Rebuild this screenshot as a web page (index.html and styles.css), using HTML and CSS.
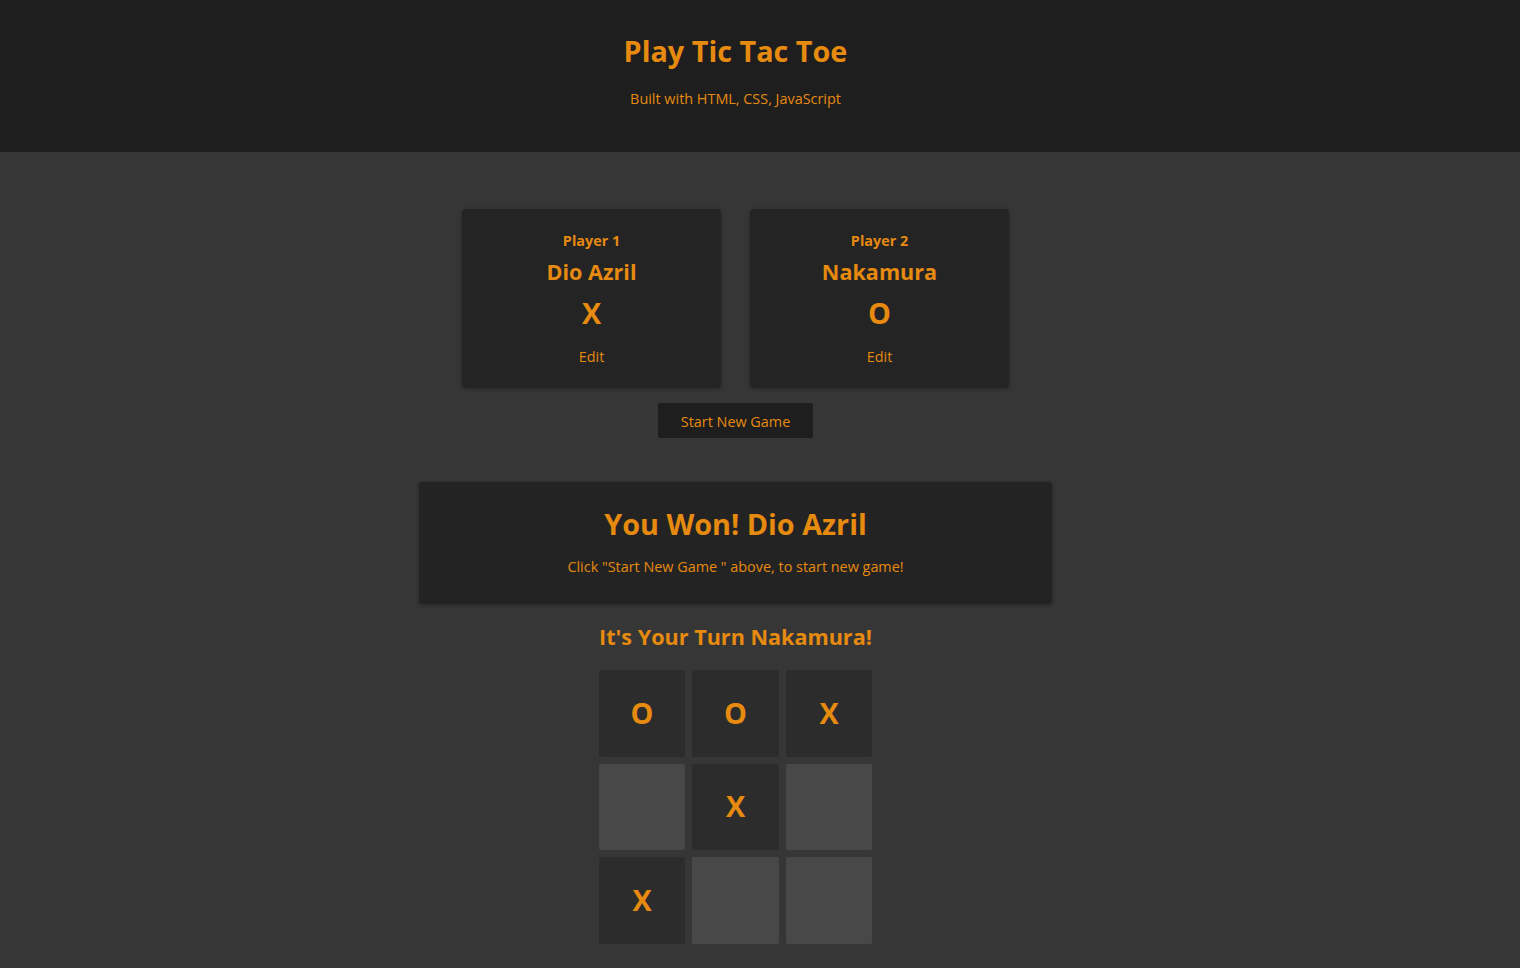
FILE: index.html
```html
<!DOCTYPE html>
<html lang="en">
<head>
  <meta charset="utf-8" />
  <meta name="viewport" content="width=device-width, initial-scale=1" />
  <title>Play Tic Tac Toe</title>
  <link rel="stylesheet" href="styles.css">
</head>
<body>
  <header class="site-header">
    <h1>Play Tic Tac Toe</h1>
    <p>Built with HTML, CSS, JavaScript</p>
  </header>

  <main class="main">
    <section class="players">
      <article class="player-card">
        <h3>Player 1</h3>
        <h2>Dio Azril</h2>
        <p class="symbol">X</p>
        <button class="link-btn">Edit</button>
      </article>
      <article class="player-card">
        <h3>Player 2</h3>
        <h2>Nakamura</h2>
        <p class="symbol">O</p>
        <button class="link-btn">Edit</button>
      </article>
    </section>

    <button class="start-btn">Start New Game</button>

    <section class="game-over">
      <h2>You Won! Dio Azril</h2>
      <p>Click "Start New Game " above, to start new game!</p>
    </section>

    <h2 class="turn">It's Your Turn Nakamura!</h2>

    <ol class="board">
      <li class="cell taken">O</li>
      <li class="cell taken">O</li>
      <li class="cell taken">X</li>
      <li class="cell"></li>
      <li class="cell taken">X</li>
      <li class="cell"></li>
      <li class="cell taken">X</li>
      <li class="cell"></li>
      <li class="cell"></li>
    </ol>
  </main>
</body>
</html>
```

FILE: styles.css
```css
* {
  box-sizing: border-box;
}
body {
  font-family: "Open Sans", "Noto Sans", sans-serif;
  background: #363636;
  color: #e68a10;
  margin: 0;
  padding-right: 49px;
}
h1, h2, h3, p {
  margin: 0;
}
.site-header {
  background: #1e1e1e;
  text-align: center;
  height: 152px;
  padding: 32px 49px 0 0;
  margin-right: -49px;
}
.site-header h1 {
  font-size: 28.8px;
  line-height: 38px;
}
.site-header p {
  font-size: 14.4px;
  line-height: 20px;
  margin-top: 19px;
}
.main {
  display: flex;
  flex-direction: column;
  align-items: center;
  padding-top: 57px;
}
.players {
  display: flex;
  gap: 29px;
}
.player-card {
  width: 259px;
  height: 179px;
  background: #242424;
  border-radius: 4px;
  box-shadow: 0 1px 4px rgba(0, 0, 0, 0.3);
  text-align: center;
  padding-top: 22px;
  display: flex;
  flex-direction: column;
  align-items: center;
}
.player-card h3 {
  font-size: 14.4px;
  line-height: 20px;
}
.player-card h2 {
  font-size: 21.6px;
  line-height: 29px;
  margin-top: 6px;
}
.symbol {
  font-size: 28.8px;
  font-weight: 700;
  line-height: 38px;
  margin-top: 8px;
}
.link-btn {
  font: inherit;
  font-size: 14.4px;
  line-height: 20px;
  color: inherit;
  background: none;
  border: none;
  padding: 0;
  margin-top: 15px;
  cursor: pointer;
}
.start-btn {
  margin-top: 15px;
  width: 155px;
  height: 35px;
  font: inherit;
  font-size: 14.4px;
  color: #e68a10;
  background: #1e1e1e;
  border: none;
  border-radius: 2px;
  padding-top: 2px;
  cursor: pointer;
}
.game-over {
  margin-top: 44px;
  width: 633px;
  height: 122px;
  background: #232323;
  border-radius: 3px;
  box-shadow: 0 1px 4px rgba(0, 0, 0, 0.3);
  text-align: center;
  padding-top: 23px;
}
.game-over h2 {
  font-size: 28.8px;
  line-height: 38px;
}
.game-over p {
  font-size: 14.4px;
  line-height: 20px;
  margin-top: 14px;
}
.turn {
  font-size: 21.6px;
  line-height: 29px;
  margin-top: 18px;
}
.board {
  list-style: none;
  margin: 19px 0 0;
  padding: 0;
  display: grid;
  grid-template-columns: repeat(3, 86.5px);
  grid-auto-rows: 86.5px;
  gap: 7px;
}
.cell {
  background: #484848;
  border-radius: 2px;
  display: flex;
  align-items: center;
  justify-content: center;
  padding-bottom: 2px;
  font-size: 28.8px;
  font-weight: 700;
}
.cell.taken {
  background: #2c2c2c;
}
```
